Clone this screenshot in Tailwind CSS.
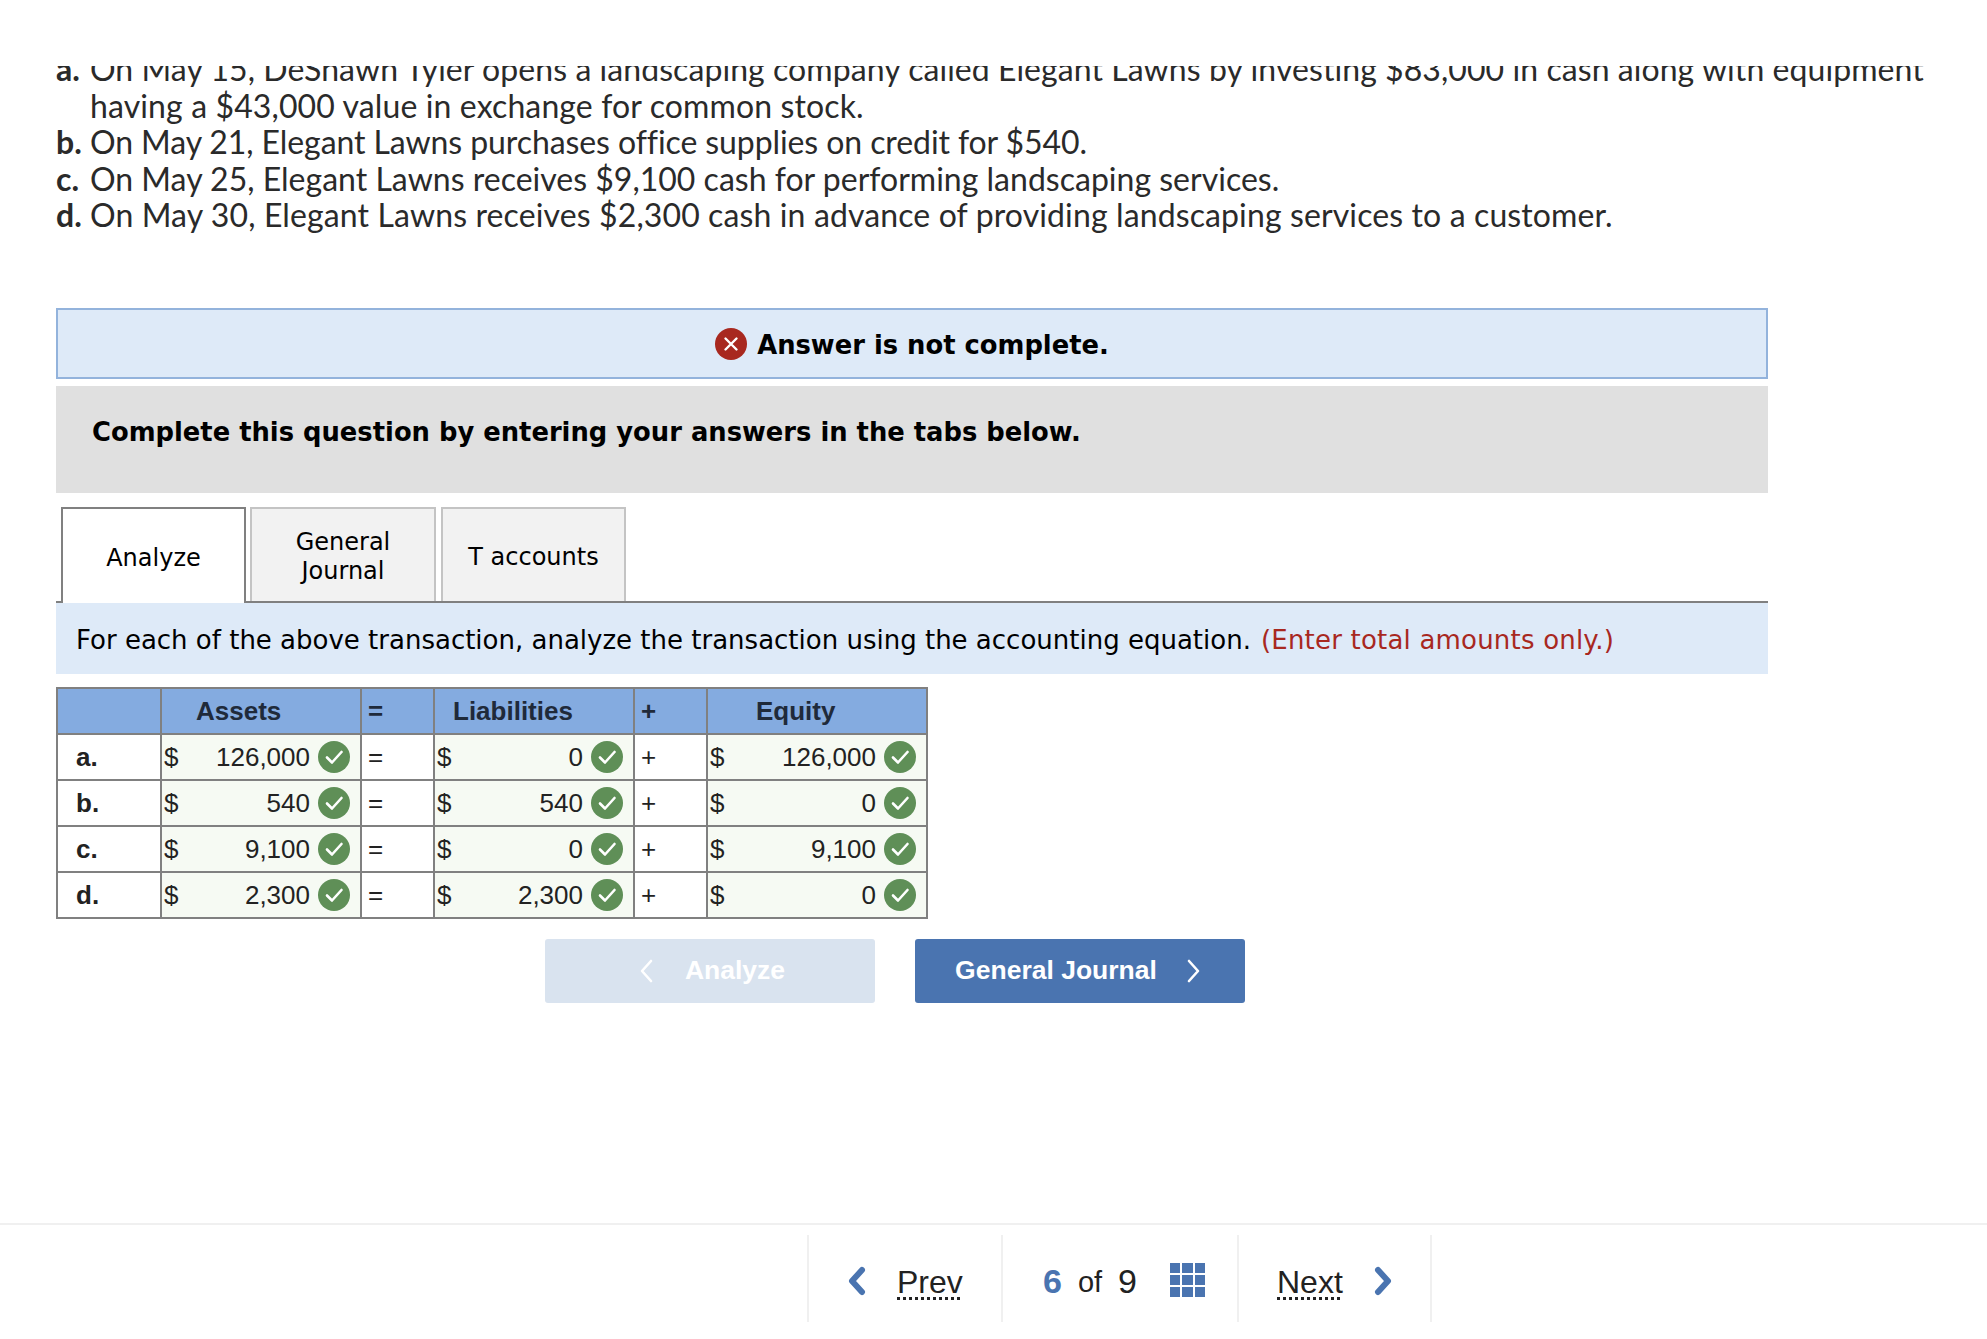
<!DOCTYPE html>
<html><head><meta charset="utf-8"><script src="https://cdn.jsdelivr.net/npm/@tailwindcss/browser@4"></script></head>
<body class="bg-white">
<div class="w-[1987px] h-[1339px] overflow-hidden flex flex-col relative">
  <div class="mt-[66px] h-[183px] overflow-hidden shrink-0">
    <div class="-mt-[15px] pl-[56px] font-['Lato',sans-serif] text-[32px] tracking-[0.12px] leading-[36.6px] text-[#2a2a2a] w-[1960px]">
      <div class="flex"><b class="w-[34px] shrink-0 font-bold">a.</b><span><span class="tracking-[0.07px]">On May 15, DeShawn Tyler opens a landscaping company called Elegant Lawns by investing $83,000 in cash along with equipment</span><br>having a $43,000 value in exchange for common stock.</span></div>
      <div class="flex"><b class="w-[34px] shrink-0 font-bold">b.</b><span class="tracking-[-0.09px]">On May 21, Elegant Lawns purchases office supplies on credit for $540.</span></div>
      <div class="flex"><b class="w-[34px] shrink-0 font-bold">c.</b><span class="tracking-[0.01px]">On May 25, Elegant Lawns receives $9,100 cash for performing landscaping services.</span></div>
      <div class="flex"><b class="w-[34px] shrink-0 font-bold">d.</b><span>On May 30, Elegant Lawns receives $2,300 cash in advance of providing landscaping services to a customer.</span></div>
    </div>
  </div>
  <div class="ml-[56px] w-[1712px] font-['DejaVu_Sans',sans-serif] text-black">
    <div class="mt-[59px] h-[71px] border-2 border-[#93b3dc] bg-[#deeaf8] flex items-center justify-center gap-[10px] font-bold text-[25.8px] pt-[3px]">
      <svg class="-mt-[2px]" width="32" height="32" viewBox="0 0 32 32"><circle cx="16" cy="16" r="16" fill="#a8281f"/><path d="M10.5 10.5l11 11M21.5 10.5l-11 11" stroke="#fff" stroke-width="2.4" stroke-linecap="round"/></svg>
      <span>Answer is not complete.</span>
    </div>
    <div class="mt-[7px] h-[107px] bg-[#e0e0e0] pl-[36px] pt-[28px] font-bold text-[25.8px] leading-[36px]">Complete this question by entering your answers in the tabs below.</div>
    <div class="mt-[14px] h-[96px] border-b-2 border-[#808080] flex pl-[5px] gap-[4px] text-[24px] leading-[29px] text-center">
      <div class="w-[185px] h-[96px] border-2 border-b-0 border-[#808080] bg-white flex items-center justify-center relative z-10 pt-[4px]">Analyze</div>
      <div class="w-[186px] h-[94px] border-2 border-b-0 border-[#c4c4c4] bg-[#f2f2f2] flex items-center justify-center pt-[4px]">General<br>Journal</div>
      <div class="w-[185px] h-[94px] border-2 border-b-0 border-[#c4c4c4] bg-[#f2f2f2] flex items-center justify-center ml-[1px] pt-[4px]">T accounts</div>
    </div>
    <div class="h-[71px] bg-[#deeaf8] pl-[20px] pt-[3px] flex items-center text-[26px]"><span>For each of the above transaction, analyze the transaction using the accounting equation.</span><span class="text-[#a8281f] ml-[10px] tracking-[0.2px]">(Enter total amounts only.)</span></div>
    <table class="mt-[13px] border-collapse table-fixed w-[870px] font-['Liberation_Sans',sans-serif] text-[26px] text-[#222]">
      <colgroup><col class="w-[104px]"><col class="w-[200px]"><col class="w-[73px]"><col class="w-[200px]"><col class="w-[73px]"><col class="w-[220px]"></colgroup>
      <thead><tr class="h-[46px] bg-[#84abe0] font-bold text-[#1f2a3a]">
        <th class="border-2 border-[#808080]"></th>
        <th class="border-2 border-[#808080] text-left pl-[34px] font-bold">Assets</th>
        <th class="border-2 border-[#808080] text-left pl-[6px] font-bold">=</th>
        <th class="border-2 border-[#808080] text-left pl-[18px] font-bold">Liabilities</th>
        <th class="border-2 border-[#808080] text-left pl-[6px] font-bold">+</th>
        <th class="border-2 border-[#808080] text-left pl-[48px] font-bold">Equity</th>
      </tr></thead>
      <tbody>
        <tr class="h-[46px]">
          <td class="border-2 border-[#808080] pl-[18px] font-bold">a.</td>
          <td class="border-2 border-[#808080] bg-[#f6faf3] p-0"><div class="flex items-center pl-[2px] pr-[10px]"><span>$</span><span class="flex-1 text-right pr-[8px]">126,000</span><svg width="32" height="32" viewBox="0 0 32 32"><circle cx="16" cy="16" r="16" fill="#5f8f57"/><path d="M9 16.5l5 5 9.5-10.5" fill="none" stroke="#fff" stroke-width="2.6" stroke-linecap="round" stroke-linejoin="round"/></svg></div></td>
          <td class="border-2 border-[#808080] pl-[6px]">=</td>
          <td class="border-2 border-[#808080] bg-[#f6faf3] p-0"><div class="flex items-center pl-[2px] pr-[10px]"><span>$</span><span class="flex-1 text-right pr-[8px]">0</span><svg width="32" height="32" viewBox="0 0 32 32"><circle cx="16" cy="16" r="16" fill="#5f8f57"/><path d="M9 16.5l5 5 9.5-10.5" fill="none" stroke="#fff" stroke-width="2.6" stroke-linecap="round" stroke-linejoin="round"/></svg></div></td>
          <td class="border-2 border-[#808080] pl-[6px]">+</td>
          <td class="border-2 border-[#808080] bg-[#f6faf3] p-0"><div class="flex items-center pl-[2px] pr-[10px]"><span>$</span><span class="flex-1 text-right pr-[8px]">126,000</span><svg width="32" height="32" viewBox="0 0 32 32"><circle cx="16" cy="16" r="16" fill="#5f8f57"/><path d="M9 16.5l5 5 9.5-10.5" fill="none" stroke="#fff" stroke-width="2.6" stroke-linecap="round" stroke-linejoin="round"/></svg></div></td>
        </tr>
        <tr class="h-[46px]">
          <td class="border-2 border-[#808080] pl-[18px] font-bold">b.</td>
          <td class="border-2 border-[#808080] bg-[#f6faf3] p-0"><div class="flex items-center pl-[2px] pr-[10px]"><span>$</span><span class="flex-1 text-right pr-[8px]">540</span><svg width="32" height="32" viewBox="0 0 32 32"><circle cx="16" cy="16" r="16" fill="#5f8f57"/><path d="M9 16.5l5 5 9.5-10.5" fill="none" stroke="#fff" stroke-width="2.6" stroke-linecap="round" stroke-linejoin="round"/></svg></div></td>
          <td class="border-2 border-[#808080] pl-[6px]">=</td>
          <td class="border-2 border-[#808080] bg-[#f6faf3] p-0"><div class="flex items-center pl-[2px] pr-[10px]"><span>$</span><span class="flex-1 text-right pr-[8px]">540</span><svg width="32" height="32" viewBox="0 0 32 32"><circle cx="16" cy="16" r="16" fill="#5f8f57"/><path d="M9 16.5l5 5 9.5-10.5" fill="none" stroke="#fff" stroke-width="2.6" stroke-linecap="round" stroke-linejoin="round"/></svg></div></td>
          <td class="border-2 border-[#808080] pl-[6px]">+</td>
          <td class="border-2 border-[#808080] bg-[#f6faf3] p-0"><div class="flex items-center pl-[2px] pr-[10px]"><span>$</span><span class="flex-1 text-right pr-[8px]">0</span><svg width="32" height="32" viewBox="0 0 32 32"><circle cx="16" cy="16" r="16" fill="#5f8f57"/><path d="M9 16.5l5 5 9.5-10.5" fill="none" stroke="#fff" stroke-width="2.6" stroke-linecap="round" stroke-linejoin="round"/></svg></div></td>
        </tr>
        <tr class="h-[46px]">
          <td class="border-2 border-[#808080] pl-[18px] font-bold">c.</td>
          <td class="border-2 border-[#808080] bg-[#f6faf3] p-0"><div class="flex items-center pl-[2px] pr-[10px]"><span>$</span><span class="flex-1 text-right pr-[8px]">9,100</span><svg width="32" height="32" viewBox="0 0 32 32"><circle cx="16" cy="16" r="16" fill="#5f8f57"/><path d="M9 16.5l5 5 9.5-10.5" fill="none" stroke="#fff" stroke-width="2.6" stroke-linecap="round" stroke-linejoin="round"/></svg></div></td>
          <td class="border-2 border-[#808080] pl-[6px]">=</td>
          <td class="border-2 border-[#808080] bg-[#f6faf3] p-0"><div class="flex items-center pl-[2px] pr-[10px]"><span>$</span><span class="flex-1 text-right pr-[8px]">0</span><svg width="32" height="32" viewBox="0 0 32 32"><circle cx="16" cy="16" r="16" fill="#5f8f57"/><path d="M9 16.5l5 5 9.5-10.5" fill="none" stroke="#fff" stroke-width="2.6" stroke-linecap="round" stroke-linejoin="round"/></svg></div></td>
          <td class="border-2 border-[#808080] pl-[6px]">+</td>
          <td class="border-2 border-[#808080] bg-[#f6faf3] p-0"><div class="flex items-center pl-[2px] pr-[10px]"><span>$</span><span class="flex-1 text-right pr-[8px]">9,100</span><svg width="32" height="32" viewBox="0 0 32 32"><circle cx="16" cy="16" r="16" fill="#5f8f57"/><path d="M9 16.5l5 5 9.5-10.5" fill="none" stroke="#fff" stroke-width="2.6" stroke-linecap="round" stroke-linejoin="round"/></svg></div></td>
        </tr>
        <tr class="h-[46px]">
          <td class="border-2 border-[#808080] pl-[18px] font-bold">d.</td>
          <td class="border-2 border-[#808080] bg-[#f6faf3] p-0"><div class="flex items-center pl-[2px] pr-[10px]"><span>$</span><span class="flex-1 text-right pr-[8px]">2,300</span><svg width="32" height="32" viewBox="0 0 32 32"><circle cx="16" cy="16" r="16" fill="#5f8f57"/><path d="M9 16.5l5 5 9.5-10.5" fill="none" stroke="#fff" stroke-width="2.6" stroke-linecap="round" stroke-linejoin="round"/></svg></div></td>
          <td class="border-2 border-[#808080] pl-[6px]">=</td>
          <td class="border-2 border-[#808080] bg-[#f6faf3] p-0"><div class="flex items-center pl-[2px] pr-[10px]"><span>$</span><span class="flex-1 text-right pr-[8px]">2,300</span><svg width="32" height="32" viewBox="0 0 32 32"><circle cx="16" cy="16" r="16" fill="#5f8f57"/><path d="M9 16.5l5 5 9.5-10.5" fill="none" stroke="#fff" stroke-width="2.6" stroke-linecap="round" stroke-linejoin="round"/></svg></div></td>
          <td class="border-2 border-[#808080] pl-[6px]">+</td>
          <td class="border-2 border-[#808080] bg-[#f6faf3] p-0"><div class="flex items-center pl-[2px] pr-[10px]"><span>$</span><span class="flex-1 text-right pr-[8px]">0</span><svg width="32" height="32" viewBox="0 0 32 32"><circle cx="16" cy="16" r="16" fill="#5f8f57"/><path d="M9 16.5l5 5 9.5-10.5" fill="none" stroke="#fff" stroke-width="2.6" stroke-linecap="round" stroke-linejoin="round"/></svg></div></td>
        </tr>
      </tbody>
    </table>
    <div class="mt-[20px] ml-[489px] flex gap-[40px] font-['Liberation_Sans',sans-serif] font-bold text-[26.5px] text-white">
      <div class="w-[330px] h-[64px] rounded-[3px] bg-[#d9e3ef] flex items-center justify-center gap-[32px] pl-[4px]">
        <svg width="14" height="24" viewBox="0 0 14 24"><path d="M12 2L3 12l9 10" fill="none" stroke="#fff" stroke-width="2.6" stroke-linecap="round" stroke-linejoin="round"/></svg><span>Analyze</span>
      </div>
      <div class="w-[330px] h-[64px] rounded-[3px] bg-[#4a74b0] flex items-center justify-center gap-[30px] pr-[4px]">
        <span>General Journal</span><svg width="14" height="24" viewBox="0 0 14 24"><path d="M2 2l9 10-9 10" fill="none" stroke="#fff" stroke-width="2.6" stroke-linecap="round" stroke-linejoin="round"/></svg>
      </div>
    </div>
  </div>
  <div class="mt-[220px] border-t-2 border-[#f0f0f0] pt-[10px] pl-[807px] flex font-['Liberation_Sans',sans-serif] text-[#222] h-[117px]">
    <div class="h-[87px] w-[194px] border-l-2 border-[#f0f0f0] flex items-center pl-[38px] gap-[30px] text-[32px] pt-[6px]">
      <svg class="-mt-[2px]" width="20" height="30" viewBox="0 0 20 30"><path d="M15 4L5 15l10 11" fill="none" stroke="#4a74b0" stroke-width="6" stroke-linecap="round" stroke-linejoin="round"/></svg>
      <span class="underline decoration-dotted decoration-[3px] underline-offset-[4px]">Prev</span>
    </div>
    <div class="h-[87px] w-[236px] border-l-2 border-[#f0f0f0] flex items-center pl-[40px] text-[29px] pt-[6px]">
      <b class="text-[#4a74b0] text-[34px] font-bold mr-[16px]">6</b><span class="mr-[16px] pt-[3px]">of</span><span class="text-[34px] mr-[33px]">9</span>
      <div class="grid grid-cols-3 gap-[2px] w-[35px] -mt-[3px]">
        <i class="h-[10px] bg-[#4a74b0]"></i><i class="h-[10px] bg-[#4a74b0]"></i><i class="h-[10px] bg-[#4a74b0]"></i>
        <i class="h-[10px] bg-[#4a74b0]"></i><i class="h-[10px] bg-[#4a74b0]"></i><i class="h-[10px] bg-[#4a74b0]"></i>
        <i class="h-[10px] bg-[#4a74b0]"></i><i class="h-[10px] bg-[#4a74b0]"></i><i class="h-[10px] bg-[#4a74b0]"></i>
      </div>
    </div>
    <div class="h-[87px] w-[195px] border-x-2 border-[#f0f0f0] flex items-center pl-[38px] gap-[30px] text-[32px] pt-[6px]">
      <span class="underline decoration-dotted decoration-[3px] underline-offset-[4px]">Next</span>
      <svg class="-mt-[2px]" width="20" height="30" viewBox="0 0 20 30"><path d="M5 4l10 11L5 26" fill="none" stroke="#4a74b0" stroke-width="6" stroke-linecap="round" stroke-linejoin="round"/></svg>
    </div>
  </div>
</div>
</body></html>
